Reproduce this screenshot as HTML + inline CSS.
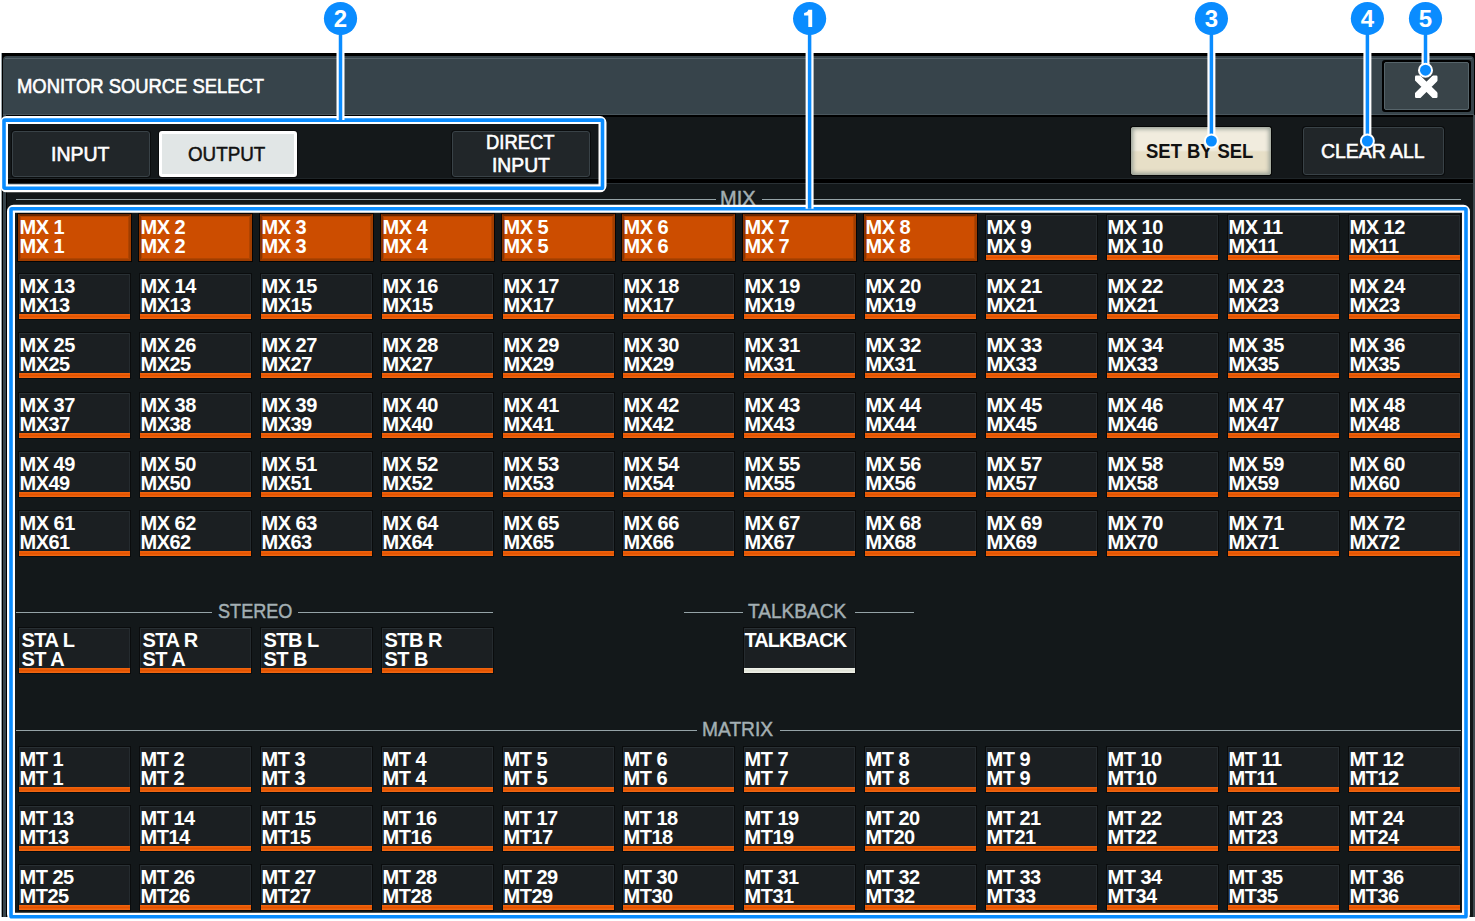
<!DOCTYPE html><html><head><meta charset='utf-8'><style>
*{margin:0;padding:0;box-sizing:border-box}
html,body{width:1475px;height:921px;overflow:hidden;background:#fff;font-family:"Liberation Sans", sans-serif}
.a{position:absolute}
.t{position:absolute;white-space:pre;line-height:23px;color:#fff}
.cell{position:absolute;width:113px;height:47px;background:#0a0c0d}
.cell .in{position:absolute;left:1px;top:1px;right:1px;bottom:1px;background:#1b1f22;border-top:1px solid #293034;border-left:1px solid #252b2f;border-right:1px solid #252b2f}
.cell .bar{position:absolute;left:1px;right:1px;top:41px;height:5px;background:linear-gradient(#f2660f,#e35300 50%,#f26a15)}
.cell .l1,.cell .l2{position:absolute;left:1.5px;white-space:pre;font:bold 20px/23px "Liberation Sans", sans-serif;color:#fff;letter-spacing:-0.5px}
.cell .l1{top:2px}
.cell .l2{top:21px}
.sel{background:#0a0c0d}
.sel{box-shadow:0 0 0 1px #050505}
.sel .in{left:0;top:0;right:0;bottom:0;background:#cc4d00;border:2px solid #a03d00;border-top:2px solid #6a2800;border-left-color:#8a3400;box-shadow:inset 0 0 0 1px #b04400}
.lbl{position:absolute;white-space:pre;font:20px/23px "Liberation Sans", sans-serif;color:#a8b3b7}
.hl{position:absolute;height:1px;background:#95a3a7}
.btn{position:absolute;border-radius:4px;background:#0a0c0d}
.btn .in{position:absolute;left:1px;top:1px;right:1px;bottom:1px;border-radius:3px;background:#212629;border:1px solid #394247}
</style></head><body>
<div class='a' style='left:1px;top:53px;width:1474px;height:864px;background:#9aa5a9'></div>
<div class='a' style='left:2px;top:53px;width:1473px;height:864px;background:#000'></div>
<div class='a' style='left:3px;top:56px;width:1471px;height:861px;background:#37444b;border-radius:4px 4px 0 0'></div>
<div class='a' style='left:5px;top:58px;width:1467px;height:1px;background:#56636a'></div>
<div class='a' style='left:3px;top:114px;width:1471px;height:1px;background:#4a575e'></div>
<div class='a' style='left:6px;top:115px;width:1467px;height:802px;background:#000'></div>
<div class='a' style='left:7px;top:117px;width:1466px;height:62px;background:#14181a'></div>
<div class='a' style='left:7px;top:178px;width:1466px;height:1px;background:#1f2528'></div>
<div class='a' style='left:7px;top:183px;width:1466px;height:1px;background:#2a3135'></div>
<div class='a' style='left:7px;top:184px;width:1466px;height:733px;background:#13181a'></div>
<div class='a' style='left:1473px;top:115px;width:2px;height:802px;background:#3f494e'></div>
<div class='t' style='left:17px;top:75px;font:normal 20px/23px "Liberation Sans", sans-serif;color:#fff;transform:scaleX(0.92);transform-origin:0 0;letter-spacing:0px;-webkit-text-stroke:0.6px #fff;'>MONITOR SOURCE SELECT</div>
<div class='a' style='left:1382px;top:60px;width:89px;height:52px;background:#000;border-radius:3px'></div>
<div class='a' style='left:1384px;top:62px;width:85px;height:48px;background:#394449;border:1px solid #56646a;border-radius:2px'></div>
<svg class='a' style='left:1410px;top:70px' width='34' height='34' viewBox='1410 70 34 34'><defs><clipPath id='xc'><rect x='1415' y='75.6' width='22.5' height='22.3' rx='1.2'/></clipPath></defs><path clip-path='url(#xc)' d='M1410 70.5 L1443 103.2 M1443 70.5 L1410 103.2' stroke='#fff' stroke-width='7.3'/></svg>
<div class='btn' style='left:11px;top:130px;width:140px;height:48px'><div class='in' style=''></div></div>
<div class='t' style='left:51px;top:143px;font:normal 20px/23px "Liberation Sans", sans-serif;color:#fff;transform:scaleX(0.975);transform-origin:0 0;letter-spacing:0px;-webkit-text-stroke:0.6px #fff;'>INPUT</div>
<div class='a' style='left:158px;top:130px;width:140px;height:48px;background:#0a0c0d;border-radius:4px'></div>
<div class='a' style='left:159px;top:131px;width:138px;height:46px;background:#e1e6e6;border:3px solid #fff;border-radius:3px'></div>
<div class='t' style='left:188px;top:143px;font:normal 20px/23px "Liberation Sans", sans-serif;color:#111;transform:scaleX(0.94);transform-origin:0 0;letter-spacing:0px;-webkit-text-stroke:0.5px #111;'>OUTPUT</div>
<div class='btn' style='left:451px;top:130px;width:140px;height:48px'><div class='in' style=''></div></div>
<div class='t' style='left:486px;top:131px;font:normal 20px/23px "Liberation Sans", sans-serif;color:#fff;transform:scaleX(0.92);transform-origin:0 0;letter-spacing:0px;-webkit-text-stroke:0.6px #fff;'>DIRECT</div>
<div class='t' style='left:492px;top:154px;font:normal 20px/23px "Liberation Sans", sans-serif;color:#fff;transform:scaleX(0.965);transform-origin:0 0;letter-spacing:0px;-webkit-text-stroke:0.6px #fff;'>INPUT</div>
<div class='a' style='left:1130px;top:126px;width:142px;height:50px;background:#050606;border-radius:3px'></div>
<div class='a' style='left:1131px;top:127px;width:140px;height:48px;border-radius:3px;background:linear-gradient(#f1ecde 0,#f1ecde 48%,#e7dfc7 52%,#e7dfc7 100%);box-shadow:inset 0 0 4px 2px #949d94'></div>
<div class='t' style='left:1146px;top:140px;font:bold 20px/23px "Liberation Sans", sans-serif;color:#111;transform:scaleX(0.923);transform-origin:0 0;letter-spacing:0px;'>SET BY SEL</div>
<div class='btn' style='left:1302px;top:126px;width:143px;height:50px'><div class='in' style=''></div></div>
<div class='t' style='left:1321px;top:140px;font:normal 20px/23px "Liberation Sans", sans-serif;color:#fff;transform:scaleX(0.97);transform-origin:0 0;letter-spacing:0px;-webkit-text-stroke:0.6px #fff;'>CLEAR ALL</div>
<div class='hl' style='left:16px;top:199px;width:700px'></div>
<div class='hl' style='left:762px;top:199px;width:699px'></div>
<div class='t' style='left:720px;top:187px;font:normal 20px/23px "Liberation Sans", sans-serif;color:#a3afb3;transform:scaleX(1.0);transform-origin:0 0;letter-spacing:0px;-webkit-text-stroke:0.45px #a3afb3;'>MIX</div>
<div class='cell sel' style='left:18px;top:214px'><div class='in'></div><div class='l1'>MX 1</div><div class='l2'>MX 1</div></div>
<div class='cell sel' style='left:139px;top:214px'><div class='in'></div><div class='l1'>MX 2</div><div class='l2'>MX 2</div></div>
<div class='cell sel' style='left:260px;top:214px'><div class='in'></div><div class='l1'>MX 3</div><div class='l2'>MX 3</div></div>
<div class='cell sel' style='left:381px;top:214px'><div class='in'></div><div class='l1'>MX 4</div><div class='l2'>MX 4</div></div>
<div class='cell sel' style='left:502px;top:214px'><div class='in'></div><div class='l1'>MX 5</div><div class='l2'>MX 5</div></div>
<div class='cell sel' style='left:622px;top:214px'><div class='in'></div><div class='l1'>MX 6</div><div class='l2'>MX 6</div></div>
<div class='cell sel' style='left:743px;top:214px'><div class='in'></div><div class='l1'>MX 7</div><div class='l2'>MX 7</div></div>
<div class='cell sel' style='left:864px;top:214px'><div class='in'></div><div class='l1'>MX 8</div><div class='l2'>MX 8</div></div>
<div class='cell' style='left:985px;top:214px'><div class='in'></div><div class='bar' style=''></div><div class='l1'>MX 9</div><div class='l2'>MX 9</div></div>
<div class='cell' style='left:1106px;top:214px'><div class='in'></div><div class='bar' style=''></div><div class='l1'>MX 10</div><div class='l2'>MX 10</div></div>
<div class='cell' style='left:1227px;top:214px'><div class='in'></div><div class='bar' style=''></div><div class='l1'>MX 11</div><div class='l2'>MX11</div></div>
<div class='cell' style='left:1348px;top:214px'><div class='in'></div><div class='bar' style=''></div><div class='l1'>MX 12</div><div class='l2'>MX11</div></div>
<div class='cell' style='left:18px;top:273px'><div class='in'></div><div class='bar' style=''></div><div class='l1'>MX 13</div><div class='l2'>MX13</div></div>
<div class='cell' style='left:139px;top:273px'><div class='in'></div><div class='bar' style=''></div><div class='l1'>MX 14</div><div class='l2'>MX13</div></div>
<div class='cell' style='left:260px;top:273px'><div class='in'></div><div class='bar' style=''></div><div class='l1'>MX 15</div><div class='l2'>MX15</div></div>
<div class='cell' style='left:381px;top:273px'><div class='in'></div><div class='bar' style=''></div><div class='l1'>MX 16</div><div class='l2'>MX15</div></div>
<div class='cell' style='left:502px;top:273px'><div class='in'></div><div class='bar' style=''></div><div class='l1'>MX 17</div><div class='l2'>MX17</div></div>
<div class='cell' style='left:622px;top:273px'><div class='in'></div><div class='bar' style=''></div><div class='l1'>MX 18</div><div class='l2'>MX17</div></div>
<div class='cell' style='left:743px;top:273px'><div class='in'></div><div class='bar' style=''></div><div class='l1'>MX 19</div><div class='l2'>MX19</div></div>
<div class='cell' style='left:864px;top:273px'><div class='in'></div><div class='bar' style=''></div><div class='l1'>MX 20</div><div class='l2'>MX19</div></div>
<div class='cell' style='left:985px;top:273px'><div class='in'></div><div class='bar' style=''></div><div class='l1'>MX 21</div><div class='l2'>MX21</div></div>
<div class='cell' style='left:1106px;top:273px'><div class='in'></div><div class='bar' style=''></div><div class='l1'>MX 22</div><div class='l2'>MX21</div></div>
<div class='cell' style='left:1227px;top:273px'><div class='in'></div><div class='bar' style=''></div><div class='l1'>MX 23</div><div class='l2'>MX23</div></div>
<div class='cell' style='left:1348px;top:273px'><div class='in'></div><div class='bar' style=''></div><div class='l1'>MX 24</div><div class='l2'>MX23</div></div>
<div class='cell' style='left:18px;top:332px'><div class='in'></div><div class='bar' style=''></div><div class='l1'>MX 25</div><div class='l2'>MX25</div></div>
<div class='cell' style='left:139px;top:332px'><div class='in'></div><div class='bar' style=''></div><div class='l1'>MX 26</div><div class='l2'>MX25</div></div>
<div class='cell' style='left:260px;top:332px'><div class='in'></div><div class='bar' style=''></div><div class='l1'>MX 27</div><div class='l2'>MX27</div></div>
<div class='cell' style='left:381px;top:332px'><div class='in'></div><div class='bar' style=''></div><div class='l1'>MX 28</div><div class='l2'>MX27</div></div>
<div class='cell' style='left:502px;top:332px'><div class='in'></div><div class='bar' style=''></div><div class='l1'>MX 29</div><div class='l2'>MX29</div></div>
<div class='cell' style='left:622px;top:332px'><div class='in'></div><div class='bar' style=''></div><div class='l1'>MX 30</div><div class='l2'>MX29</div></div>
<div class='cell' style='left:743px;top:332px'><div class='in'></div><div class='bar' style=''></div><div class='l1'>MX 31</div><div class='l2'>MX31</div></div>
<div class='cell' style='left:864px;top:332px'><div class='in'></div><div class='bar' style=''></div><div class='l1'>MX 32</div><div class='l2'>MX31</div></div>
<div class='cell' style='left:985px;top:332px'><div class='in'></div><div class='bar' style=''></div><div class='l1'>MX 33</div><div class='l2'>MX33</div></div>
<div class='cell' style='left:1106px;top:332px'><div class='in'></div><div class='bar' style=''></div><div class='l1'>MX 34</div><div class='l2'>MX33</div></div>
<div class='cell' style='left:1227px;top:332px'><div class='in'></div><div class='bar' style=''></div><div class='l1'>MX 35</div><div class='l2'>MX35</div></div>
<div class='cell' style='left:1348px;top:332px'><div class='in'></div><div class='bar' style=''></div><div class='l1'>MX 36</div><div class='l2'>MX35</div></div>
<div class='cell' style='left:18px;top:392px'><div class='in'></div><div class='bar' style=''></div><div class='l1'>MX 37</div><div class='l2'>MX37</div></div>
<div class='cell' style='left:139px;top:392px'><div class='in'></div><div class='bar' style=''></div><div class='l1'>MX 38</div><div class='l2'>MX38</div></div>
<div class='cell' style='left:260px;top:392px'><div class='in'></div><div class='bar' style=''></div><div class='l1'>MX 39</div><div class='l2'>MX39</div></div>
<div class='cell' style='left:381px;top:392px'><div class='in'></div><div class='bar' style=''></div><div class='l1'>MX 40</div><div class='l2'>MX40</div></div>
<div class='cell' style='left:502px;top:392px'><div class='in'></div><div class='bar' style=''></div><div class='l1'>MX 41</div><div class='l2'>MX41</div></div>
<div class='cell' style='left:622px;top:392px'><div class='in'></div><div class='bar' style=''></div><div class='l1'>MX 42</div><div class='l2'>MX42</div></div>
<div class='cell' style='left:743px;top:392px'><div class='in'></div><div class='bar' style=''></div><div class='l1'>MX 43</div><div class='l2'>MX43</div></div>
<div class='cell' style='left:864px;top:392px'><div class='in'></div><div class='bar' style=''></div><div class='l1'>MX 44</div><div class='l2'>MX44</div></div>
<div class='cell' style='left:985px;top:392px'><div class='in'></div><div class='bar' style=''></div><div class='l1'>MX 45</div><div class='l2'>MX45</div></div>
<div class='cell' style='left:1106px;top:392px'><div class='in'></div><div class='bar' style=''></div><div class='l1'>MX 46</div><div class='l2'>MX46</div></div>
<div class='cell' style='left:1227px;top:392px'><div class='in'></div><div class='bar' style=''></div><div class='l1'>MX 47</div><div class='l2'>MX47</div></div>
<div class='cell' style='left:1348px;top:392px'><div class='in'></div><div class='bar' style=''></div><div class='l1'>MX 48</div><div class='l2'>MX48</div></div>
<div class='cell' style='left:18px;top:451px'><div class='in'></div><div class='bar' style=''></div><div class='l1'>MX 49</div><div class='l2'>MX49</div></div>
<div class='cell' style='left:139px;top:451px'><div class='in'></div><div class='bar' style=''></div><div class='l1'>MX 50</div><div class='l2'>MX50</div></div>
<div class='cell' style='left:260px;top:451px'><div class='in'></div><div class='bar' style=''></div><div class='l1'>MX 51</div><div class='l2'>MX51</div></div>
<div class='cell' style='left:381px;top:451px'><div class='in'></div><div class='bar' style=''></div><div class='l1'>MX 52</div><div class='l2'>MX52</div></div>
<div class='cell' style='left:502px;top:451px'><div class='in'></div><div class='bar' style=''></div><div class='l1'>MX 53</div><div class='l2'>MX53</div></div>
<div class='cell' style='left:622px;top:451px'><div class='in'></div><div class='bar' style=''></div><div class='l1'>MX 54</div><div class='l2'>MX54</div></div>
<div class='cell' style='left:743px;top:451px'><div class='in'></div><div class='bar' style=''></div><div class='l1'>MX 55</div><div class='l2'>MX55</div></div>
<div class='cell' style='left:864px;top:451px'><div class='in'></div><div class='bar' style=''></div><div class='l1'>MX 56</div><div class='l2'>MX56</div></div>
<div class='cell' style='left:985px;top:451px'><div class='in'></div><div class='bar' style=''></div><div class='l1'>MX 57</div><div class='l2'>MX57</div></div>
<div class='cell' style='left:1106px;top:451px'><div class='in'></div><div class='bar' style=''></div><div class='l1'>MX 58</div><div class='l2'>MX58</div></div>
<div class='cell' style='left:1227px;top:451px'><div class='in'></div><div class='bar' style=''></div><div class='l1'>MX 59</div><div class='l2'>MX59</div></div>
<div class='cell' style='left:1348px;top:451px'><div class='in'></div><div class='bar' style=''></div><div class='l1'>MX 60</div><div class='l2'>MX60</div></div>
<div class='cell' style='left:18px;top:510px'><div class='in'></div><div class='bar' style=''></div><div class='l1'>MX 61</div><div class='l2'>MX61</div></div>
<div class='cell' style='left:139px;top:510px'><div class='in'></div><div class='bar' style=''></div><div class='l1'>MX 62</div><div class='l2'>MX62</div></div>
<div class='cell' style='left:260px;top:510px'><div class='in'></div><div class='bar' style=''></div><div class='l1'>MX 63</div><div class='l2'>MX63</div></div>
<div class='cell' style='left:381px;top:510px'><div class='in'></div><div class='bar' style=''></div><div class='l1'>MX 64</div><div class='l2'>MX64</div></div>
<div class='cell' style='left:502px;top:510px'><div class='in'></div><div class='bar' style=''></div><div class='l1'>MX 65</div><div class='l2'>MX65</div></div>
<div class='cell' style='left:622px;top:510px'><div class='in'></div><div class='bar' style=''></div><div class='l1'>MX 66</div><div class='l2'>MX66</div></div>
<div class='cell' style='left:743px;top:510px'><div class='in'></div><div class='bar' style=''></div><div class='l1'>MX 67</div><div class='l2'>MX67</div></div>
<div class='cell' style='left:864px;top:510px'><div class='in'></div><div class='bar' style=''></div><div class='l1'>MX 68</div><div class='l2'>MX68</div></div>
<div class='cell' style='left:985px;top:510px'><div class='in'></div><div class='bar' style=''></div><div class='l1'>MX 69</div><div class='l2'>MX69</div></div>
<div class='cell' style='left:1106px;top:510px'><div class='in'></div><div class='bar' style=''></div><div class='l1'>MX 70</div><div class='l2'>MX70</div></div>
<div class='cell' style='left:1227px;top:510px'><div class='in'></div><div class='bar' style=''></div><div class='l1'>MX 71</div><div class='l2'>MX71</div></div>
<div class='cell' style='left:1348px;top:510px'><div class='in'></div><div class='bar' style=''></div><div class='l1'>MX 72</div><div class='l2'>MX72</div></div>
<div class='hl' style='left:16px;top:612px;width:196px'></div>
<div class='hl' style='left:298px;top:612px;width:195px'></div>
<div class='t' style='left:218px;top:600px;font:normal 20px/23px "Liberation Sans", sans-serif;color:#a3afb3;transform:scaleX(0.905);transform-origin:0 0;letter-spacing:0px;-webkit-text-stroke:0.45px #a3afb3;'>STEREO</div>
<div class='cell' style='left:18px;top:627px'><div class='in'></div><div class='bar' style=''></div><div class='l1'><span style='position:relative;left:2px'>STA L</span></div><div class='l2'><span style='position:relative;left:2px'>ST A</span></div></div>
<div class='cell' style='left:139px;top:627px'><div class='in'></div><div class='bar' style=''></div><div class='l1'><span style='position:relative;left:2px'>STA R</span></div><div class='l2'><span style='position:relative;left:2px'>ST A</span></div></div>
<div class='cell' style='left:260px;top:627px'><div class='in'></div><div class='bar' style=''></div><div class='l1'><span style='position:relative;left:2px'>STB L</span></div><div class='l2'><span style='position:relative;left:2px'>ST B</span></div></div>
<div class='cell' style='left:381px;top:627px'><div class='in'></div><div class='bar' style=''></div><div class='l1'><span style='position:relative;left:2px'>STB R</span></div><div class='l2'><span style='position:relative;left:2px'>ST B</span></div></div>
<div class='hl' style='left:684px;top:612px;width:59px'></div>
<div class='hl' style='left:855px;top:612px;width:59px'></div>
<div class='t' style='left:748px;top:600px;font:normal 20px/23px "Liberation Sans", sans-serif;color:#a3afb3;transform:scaleX(0.955);transform-origin:0 0;letter-spacing:0px;-webkit-text-stroke:0.45px #a3afb3;'>TALKBACK</div>
<div class='cell' style='left:743px;top:627px'><div class='in'></div><div class='bar' style='background:linear-gradient(#f4f5ee,#dfe2d6 50%,#f0f2ea)'></div><div class='l1'><span style='letter-spacing:-1px'>TALKBACK</span></div><div class='l2'></div></div>
<div class='hl' style='left:16px;top:730px;width:681px'></div>
<div class='hl' style='left:780px;top:730px;width:681px'></div>
<div class='t' style='left:702px;top:718px;font:normal 20px/23px "Liberation Sans", sans-serif;color:#a3afb3;transform:scaleX(0.96);transform-origin:0 0;letter-spacing:0px;-webkit-text-stroke:0.45px #a3afb3;'>MATRIX</div>
<div class='cell' style='left:18px;top:746px'><div class='in'></div><div class='bar' style=''></div><div class='l1'>MT 1</div><div class='l2'>MT 1</div></div>
<div class='cell' style='left:139px;top:746px'><div class='in'></div><div class='bar' style=''></div><div class='l1'>MT 2</div><div class='l2'>MT 2</div></div>
<div class='cell' style='left:260px;top:746px'><div class='in'></div><div class='bar' style=''></div><div class='l1'>MT 3</div><div class='l2'>MT 3</div></div>
<div class='cell' style='left:381px;top:746px'><div class='in'></div><div class='bar' style=''></div><div class='l1'>MT 4</div><div class='l2'>MT 4</div></div>
<div class='cell' style='left:502px;top:746px'><div class='in'></div><div class='bar' style=''></div><div class='l1'>MT 5</div><div class='l2'>MT 5</div></div>
<div class='cell' style='left:622px;top:746px'><div class='in'></div><div class='bar' style=''></div><div class='l1'>MT 6</div><div class='l2'>MT 6</div></div>
<div class='cell' style='left:743px;top:746px'><div class='in'></div><div class='bar' style=''></div><div class='l1'>MT 7</div><div class='l2'>MT 7</div></div>
<div class='cell' style='left:864px;top:746px'><div class='in'></div><div class='bar' style=''></div><div class='l1'>MT 8</div><div class='l2'>MT 8</div></div>
<div class='cell' style='left:985px;top:746px'><div class='in'></div><div class='bar' style=''></div><div class='l1'>MT 9</div><div class='l2'>MT 9</div></div>
<div class='cell' style='left:1106px;top:746px'><div class='in'></div><div class='bar' style=''></div><div class='l1'>MT 10</div><div class='l2'>MT10</div></div>
<div class='cell' style='left:1227px;top:746px'><div class='in'></div><div class='bar' style=''></div><div class='l1'>MT 11</div><div class='l2'>MT11</div></div>
<div class='cell' style='left:1348px;top:746px'><div class='in'></div><div class='bar' style=''></div><div class='l1'>MT 12</div><div class='l2'>MT12</div></div>
<div class='cell' style='left:18px;top:805px'><div class='in'></div><div class='bar' style=''></div><div class='l1'>MT 13</div><div class='l2'>MT13</div></div>
<div class='cell' style='left:139px;top:805px'><div class='in'></div><div class='bar' style=''></div><div class='l1'>MT 14</div><div class='l2'>MT14</div></div>
<div class='cell' style='left:260px;top:805px'><div class='in'></div><div class='bar' style=''></div><div class='l1'>MT 15</div><div class='l2'>MT15</div></div>
<div class='cell' style='left:381px;top:805px'><div class='in'></div><div class='bar' style=''></div><div class='l1'>MT 16</div><div class='l2'>MT16</div></div>
<div class='cell' style='left:502px;top:805px'><div class='in'></div><div class='bar' style=''></div><div class='l1'>MT 17</div><div class='l2'>MT17</div></div>
<div class='cell' style='left:622px;top:805px'><div class='in'></div><div class='bar' style=''></div><div class='l1'>MT 18</div><div class='l2'>MT18</div></div>
<div class='cell' style='left:743px;top:805px'><div class='in'></div><div class='bar' style=''></div><div class='l1'>MT 19</div><div class='l2'>MT19</div></div>
<div class='cell' style='left:864px;top:805px'><div class='in'></div><div class='bar' style=''></div><div class='l1'>MT 20</div><div class='l2'>MT20</div></div>
<div class='cell' style='left:985px;top:805px'><div class='in'></div><div class='bar' style=''></div><div class='l1'>MT 21</div><div class='l2'>MT21</div></div>
<div class='cell' style='left:1106px;top:805px'><div class='in'></div><div class='bar' style=''></div><div class='l1'>MT 22</div><div class='l2'>MT22</div></div>
<div class='cell' style='left:1227px;top:805px'><div class='in'></div><div class='bar' style=''></div><div class='l1'>MT 23</div><div class='l2'>MT23</div></div>
<div class='cell' style='left:1348px;top:805px'><div class='in'></div><div class='bar' style=''></div><div class='l1'>MT 24</div><div class='l2'>MT24</div></div>
<div class='cell' style='left:18px;top:864px'><div class='in'></div><div class='bar' style=''></div><div class='l1'>MT 25</div><div class='l2'>MT25</div></div>
<div class='cell' style='left:139px;top:864px'><div class='in'></div><div class='bar' style=''></div><div class='l1'>MT 26</div><div class='l2'>MT26</div></div>
<div class='cell' style='left:260px;top:864px'><div class='in'></div><div class='bar' style=''></div><div class='l1'>MT 27</div><div class='l2'>MT27</div></div>
<div class='cell' style='left:381px;top:864px'><div class='in'></div><div class='bar' style=''></div><div class='l1'>MT 28</div><div class='l2'>MT28</div></div>
<div class='cell' style='left:502px;top:864px'><div class='in'></div><div class='bar' style=''></div><div class='l1'>MT 29</div><div class='l2'>MT29</div></div>
<div class='cell' style='left:622px;top:864px'><div class='in'></div><div class='bar' style=''></div><div class='l1'>MT 30</div><div class='l2'>MT30</div></div>
<div class='cell' style='left:743px;top:864px'><div class='in'></div><div class='bar' style=''></div><div class='l1'>MT 31</div><div class='l2'>MT31</div></div>
<div class='cell' style='left:864px;top:864px'><div class='in'></div><div class='bar' style=''></div><div class='l1'>MT 32</div><div class='l2'>MT32</div></div>
<div class='cell' style='left:985px;top:864px'><div class='in'></div><div class='bar' style=''></div><div class='l1'>MT 33</div><div class='l2'>MT33</div></div>
<div class='cell' style='left:1106px;top:864px'><div class='in'></div><div class='bar' style=''></div><div class='l1'>MT 34</div><div class='l2'>MT34</div></div>
<div class='cell' style='left:1227px;top:864px'><div class='in'></div><div class='bar' style=''></div><div class='l1'>MT 35</div><div class='l2'>MT35</div></div>
<div class='cell' style='left:1348px;top:864px'><div class='in'></div><div class='bar' style=''></div><div class='l1'>MT 36</div><div class='l2'>MT36</div></div>
<svg class='a' style='left:0;top:0' width='1475' height='921' viewBox='0 0 1475 921'><rect x='4' y='120.1' width='598.5' height='68.20000000000002' rx='2.5' fill='none' stroke='#fff' stroke-width='8'/><rect x='4' y='120.1' width='598.5' height='68.20000000000002' rx='0.8' fill='none' stroke='#0a8cff' stroke-width='3.6'/><rect x='11' y='208.8' width='1455' height='707.9000000000001' rx='2.5' fill='none' stroke='#fff' stroke-width='8'/><rect x='11' y='208.8' width='1455' height='707.9000000000001' rx='0.8' fill='none' stroke='#0a8cff' stroke-width='3.6'/><line x1='809.6' y1='34' x2='809.6' y2='208.8' stroke='#fff' stroke-width='8'/><line x1='809.6' y1='20' x2='809.6' y2='208.8' stroke='#0a8cff' stroke-width='3.5'/><circle cx='809.6' cy='18.5' r='16.6' fill='#0a8cff'/><path d='M808.3000000000001 9.8 L812.2 9.8 L812.2 27 L808.3000000000001 27 L808.3000000000001 15.4 L804.1 15.4 L804.1 12.9 Q807.6 12.7 808.3000000000001 9.8 Z' fill='#fff'/><line x1='340.5' y1='34' x2='340.5' y2='120.1' stroke='#fff' stroke-width='8'/><line x1='340.5' y1='20' x2='340.5' y2='120.1' stroke='#0a8cff' stroke-width='3.5'/><circle cx='340.5' cy='18.5' r='16.6' fill='#0a8cff'/><text x='340.5' y='27.4' text-anchor='middle' font-family='Liberation Sans' font-weight='bold' font-size='24' fill='#fff'>2</text><line x1='1211.4' y1='34' x2='1211.4' y2='141' stroke='#fff' stroke-width='8'/><line x1='1211.4' y1='20' x2='1211.4' y2='141' stroke='#0a8cff' stroke-width='3.5'/><circle cx='1211.4' cy='141' r='7.5' fill='#fff'/><circle cx='1211.4' cy='141' r='5.5' fill='#0a8cff'/><circle cx='1211.4' cy='18.5' r='16.6' fill='#0a8cff'/><text x='1211.4' y='27.4' text-anchor='middle' font-family='Liberation Sans' font-weight='bold' font-size='24' fill='#fff'>3</text><line x1='1367.4' y1='34' x2='1367.4' y2='141' stroke='#fff' stroke-width='8'/><line x1='1367.4' y1='20' x2='1367.4' y2='141' stroke='#0a8cff' stroke-width='3.5'/><circle cx='1367.4' cy='141' r='7.5' fill='#fff'/><circle cx='1367.4' cy='141' r='5.5' fill='#0a8cff'/><circle cx='1367.4' cy='18.5' r='16.6' fill='#0a8cff'/><text x='1367.4' y='27.4' text-anchor='middle' font-family='Liberation Sans' font-weight='bold' font-size='24' fill='#fff'>4</text><line x1='1425.5' y1='34' x2='1425.5' y2='70.2' stroke='#fff' stroke-width='8'/><line x1='1425.5' y1='20' x2='1425.5' y2='70.2' stroke='#0a8cff' stroke-width='3.5'/><circle cx='1425.5' cy='70.2' r='7.5' fill='#fff'/><circle cx='1425.5' cy='70.2' r='5.5' fill='#0a8cff'/><circle cx='1425.5' cy='18.5' r='16.6' fill='#0a8cff'/><text x='1425.5' y='27.4' text-anchor='middle' font-family='Liberation Sans' font-weight='bold' font-size='24' fill='#fff'>5</text></svg>
</body></html>
